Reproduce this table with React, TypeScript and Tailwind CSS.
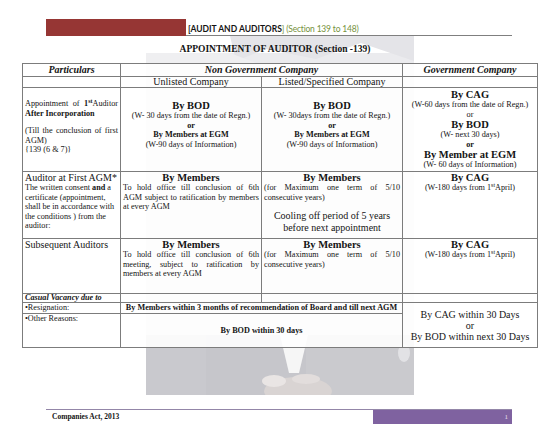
import React from "react";

const cell = "border border-[#7c7c7c] p-0 align-top";
const small = "text-[8.2px] leading-[9.5px]";
const big = "text-[10.5px] leading-[11px] font-bold";

function JLine({ children }: { children: React.ReactNode }) {
  return <span className="block text-justify [text-align-last:justify]">{children}</span>;
}

function Picture() {
  return (
    <div className="absolute left-[146px] top-[35px] w-[268px] h-[360px]">
      <svg width="268" height="360" viewBox="0 0 268 360">
        <rect x="0" y="18" width="268" height="300" fill="#ebebee" />
        <polygon points="84,1 268,1 268,26 215,8 170,24 120,14 90,26" fill="#e4e4e8" />
        <polygon points="0,18 84,18 110,28 0,28" fill="#efeff1" />
        <rect x="0" y="300" width="268" height="60" fill="#c6c6cb" />
        <rect x="0" y="300" width="60" height="60" fill="#c9c9ce" />
        <rect x="160" y="300" width="108" height="60" fill="#cacace" />
        <polygon points="134,300 162,300 153,338 143,338" fill="#f6f6f6" />
        <ellipse cx="258" cy="318" rx="6" ry="9" fill="#e2e2e5" />
        <ellipse cx="152" cy="356" rx="34" ry="14" fill="#d9d4d3" />
        <ellipse cx="128" cy="346" rx="12" ry="6" fill="#e9e5e4" />
        <ellipse cx="160" cy="344" rx="14" ry="5" fill="#e2dddc" />
      </svg>
    </div>
  );
}

export default function App() {
  return (
    <div className="relative w-[560px] h-[433px] overflow-hidden bg-white font-['Liberation_Serif',serif] text-[#141414]">
      <Picture />
      <div className="relative z-10 flex flex-col h-full">
        <div className="relative z-20 pt-[19px] pl-[46px] flex">
          <div className="w-[140px] h-[17px] bg-[#963634]" />
          <div className="w-[326px] h-[17px] border-b border-[#7f7f7f] flex items-end pl-[2px] pb-[2px] font-['Lato',sans-serif] text-[8.5px] leading-none">
            <span className="font-bold">[AUDIT AND AUDITORS </span>
            <span className="text-[#76923c] tracking-[-0.2px]">]&nbsp;(Section 139 to 148)</span>
          </div>
        </div>
        <h1 className="mt-[8px] pr-[10px] text-center font-bold text-[9.5px] leading-[10px]">
          APPOINTMENT OF AUDITOR (Section -139)
        </h1>
        <table className="mt-[9px] ml-[22px] w-[515px] table-fixed border-collapse bg-white/90">
          <colgroup>
            <col className="w-[98px]" />
            <col className="w-[141px]" />
            <col className="w-[141px]" />
            <col className="w-[135px]" />
          </colgroup>
          <tbody>
            <tr className="h-[13px]">
              <td className={`${cell} text-center font-bold italic text-[10px] leading-[11px]`}>Particulars</td>
              <td colSpan={2} className={`${cell} text-center font-bold italic text-[10px] leading-[11px]`}>
                Non Government Company
              </td>
              <td className={`${cell} text-center font-bold italic text-[10px] leading-[11px]`}>Government Company</td>
            </tr>
            <tr className="h-[11px]">
              <td className={cell} />
              <td className={`${cell} text-center text-[10px] leading-[10px]`}>Unlisted Company</td>
              <td className={`${cell} text-center text-[10px] leading-[10px]`}>Listed/Specified Company</td>
              <td className={cell} />
            </tr>
            <tr className="h-[84px]">
              <td className={`${cell} px-[2px] pt-[11px] ${small}`}>
                <JLine>
                  Appointment of <b>1<sup className="text-[6px]">st</sup></b>Auditor
                </JLine>
                <span className="block font-bold">After Incorporation</span>
                <span className="block mt-[8px] text-justify">(Till the conclusion of first AGM)</span>
                <span className="block">{"{139 (6 & 7)}"}</span>
              </td>
              <td className={`${cell} pt-[12px] text-center`}>
                <div className={big}>By BOD</div>
                <div className={small}>(W- 30 days from the date of Regn.)</div>
                <div className={`${small} font-bold`}>or</div>
                <div className={`${small} font-bold`}>By Members at EGM</div>
                <div className={small}>(W-90 days of Information)</div>
              </td>
              <td className={`${cell} pt-[12px] text-center`}>
                <div className={big}>By BOD</div>
                <div className={small}>(W- 30days from the date of Regn.)</div>
                <div className={`${small} font-bold`}>or</div>
                <div className={`${small} font-bold`}>By Members at EGM</div>
                <div className={small}>(W-90 days of Information)</div>
              </td>
              <td className={`${cell} pt-[1px] text-center`}>
                <div className={big}>By CAG</div>
                <div className={small}>(W-60 days from the date of Regn.)</div>
                <div className={small}>or</div>
                <div className={big}>By BOD</div>
                <div className={small}>(W- next 30 days)</div>
                <div className={`${small} font-bold`}>or</div>
                <div className={big}>By Member at EGM</div>
                <div className={small}>(W- 60 days of Information)</div>
              </td>
            </tr>
            <tr className="h-[67px]">
              <td className={`${cell} px-[2px]`}>
                <div className="text-[10px] leading-[11px]">Auditor at First AGM*</div>
                <div className={small}>
                  The written consent <b>and</b> a<br />
                  certificate (appointment,<br />
                  shall be in accordance with<br />
                  the conditions ) from the<br />
                  auditor:
                </div>
              </td>
              <td className={`${cell} px-[2px]`}>
                <div className={`${big} text-center`}>By Members</div>
                <div className={small}>
                  <JLine>To hold office till conclusion of 6th</JLine>
                  <JLine>AGM subject to ratification by members</JLine>
                  <span className="block">at every AGM</span>
                </div>
              </td>
              <td className={`${cell} px-[2px]`}>
                <div className={`${big} text-center`}>By Members</div>
                <div className={small}>
                  <JLine>(for Maximum one term of 5/10</JLine>
                  <span className="block">consecutive years)</span>
                </div>
                <div className="mt-[8px] text-center text-[10px] leading-[12px]">
                  Cooling off period of 5 years
                  <br />
                  before next appointment
                </div>
              </td>
              <td className={`${cell} text-center`}>
                <div className={big}>By CAG</div>
                <div className={small}>
                  (W-180 days from 1<sup className="text-[6px]">st</sup>April)
                </div>
              </td>
            </tr>
            <tr className="h-[55px]">
              <td className={`${cell} px-[2px]`}>
                <div className="text-[10px] leading-[11px]">Subsequent Auditors</div>
              </td>
              <td className={`${cell} px-[2px]`}>
                <div className={`${big} text-center`}>By Members</div>
                <div className={small}>
                  <JLine>To hold office till conclusion of 6th</JLine>
                  <JLine>meeting, subject to ratification by</JLine>
                  <span className="block">members at every AGM</span>
                </div>
              </td>
              <td className={`${cell} px-[2px]`}>
                <div className={`${big} text-center`}>By Members</div>
                <div className={small}>
                  <JLine>(for Maximum one term of 5/10</JLine>
                  <span className="block">consecutive years)</span>
                </div>
              </td>
              <td className={`${cell} text-center`}>
                <div className={big}>By CAG</div>
                <div className={small}>
                  (W-180 days from 1<sup className="text-[6px]">st</sup>April)
                </div>
              </td>
            </tr>
            <tr className="h-[8px]">
              <td className={`${cell} px-[2px] font-bold italic text-[8.2px] leading-[8px]`}>Casual Vacancy due to</td>
              <td className={cell} />
              <td className={cell} />
              <td className={cell} />
            </tr>
            <tr className="h-[11px]">
              <td className={`${cell} px-[2px] ${small}`}>•Resignation:</td>
              <td colSpan={2} className={`${cell} text-center font-bold ${small}`}>
                By Members within 3 months of recommendation of Board and till next AGM
              </td>
              <td rowSpan={2} className={`${cell} !align-middle text-center text-[10px] leading-[11px]`}>
                By CAG within 30 Days
                <br />
                or
                <br />
                By BOD within next 30 Days
              </td>
            </tr>
            <tr className="h-[34px]">
              <td className={`${cell} px-[2px] ${small}`}>•Other Reasons:</td>
              <td colSpan={2} className={`${cell} !align-middle text-center font-bold ${small}`}>
                By BOD within 30 days
              </td>
            </tr>
          </tbody>
        </table>
        <div className="mt-auto mb-[9px] ml-[46px] w-[466px] border-t border-[#9386a8] flex justify-between">
          <span className="pl-[6px] pt-[2px] font-bold text-[7.5px] leading-[9px]">Companies Act, 2013</span>
          <div className="w-[139px] h-[14px] bg-[#7f62a0] flex items-center justify-end pr-[4px] text-[7px] text-[#e8e0f0]">
            1
          </div>
        </div>
      </div>
    </div>
  );
}
